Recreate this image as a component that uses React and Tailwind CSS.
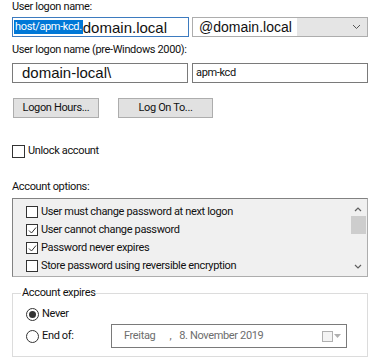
import React from 'react';

const font = { fontFamily: 'Roboto, "Liberation Sans", Arial, sans-serif' };
const big = { fontFamily: '"Liberation Sans", Arial, sans-serif', letterSpacing: 0 };

const Check = ({ checked, size = 'w-[12px] h-[12px]' }) => (
  <span className={`${size} border border-[#333] bg-white flex items-center justify-center shrink-0`}>
    {checked && (
      <svg width="9" height="9" viewBox="0 0 9 9">
        <path d="M1 4.5 L3.5 7 L8 1.5" fill="none" stroke="#333" strokeWidth="1" />
      </svg>
    )}
  </span>
);

const Radio = ({ checked }) => (
  <span className="w-[13px] h-[13px] rounded-full border border-[#333] bg-white flex items-center justify-center shrink-0">
    {checked && <span className="w-[7px] h-[7px] rounded-full bg-[#333]" />}
  </span>
);

export default function App() {
  const options = [
    { label: 'User must change password at next logon', checked: false },
    { label: 'User cannot change password', checked: true },
    { label: 'Password never expires', checked: true },
    { label: 'Store password using reversible encryption', checked: false },
  ];

  return (
    <div className="w-[376px] h-[362px] bg-white text-[11px] tracking-[-0.35px] text-[#111] overflow-hidden" style={font}>
      <div className="pl-[12px] pr-[8px]">
        <div className="h-[14px] leading-[14px]">User logon name:</div>
        <div className="flex gap-[3px] mt-[3px]">
          <div className="w-[177px] h-[20px] border border-[#3d7bbf] flex items-center pl-[1px]">
            <span className="bg-[#0078d7] text-white leading-[14px] px-[1px]">host/apm-kcd.</span>
            <span className="text-[15px] leading-[15px]" style={big}>domain.local</span>
          </div>
          <div className="w-[176px] h-[20px] border border-[#adadad] flex">
            <div className="w-[104px] bg-white flex items-center pl-[6px] text-[14px]" style={big}>@domain.local</div>
            <div className="flex-1 bg-[#e5e5e5] flex items-center justify-end pr-[6px]">
              <svg width="9" height="6" viewBox="0 0 9 6">
                <path d="M1 1 L4.5 4.5 L8 1" fill="none" stroke="#555" strokeWidth="1" />
              </svg>
            </div>
          </div>
        </div>

        <div className="mt-[6px] h-[14px] leading-[14px]">User logon name (pre-Windows 2000):</div>
        <div className="flex gap-[4px] mt-[6px]">
          <div className="w-[176px] h-[20px] border border-[#7a7a7a] flex items-center pl-[9px] text-[15px]" style={big}>domain-local\</div>
          <div className="w-[176px] h-[20px] border border-[#7a7a7a] flex items-center pl-[3px]">apm-kcd</div>
        </div>

        <div className="flex gap-[19px] mt-[15px] ml-[1px]">
          <div className="w-[86px] h-[20px] bg-[#e1e1e1] border border-[#adadad] flex items-center justify-center">Logon Hours...</div>
          <div className="w-[95px] h-[20px] bg-[#e1e1e1] border border-[#adadad] flex items-center justify-center">Log On To...</div>
        </div>

        <div className="flex items-center gap-[3px] mt-[27px] h-[13px]">
          <Check checked={false} size="w-[13px] h-[13px]" />
          <span>Unlock account</span>
        </div>

        <div className="mt-[22px] h-[14px] leading-[14px]">Account options:</div>
        <div className="mt-[4px] w-[356px] h-[79px] border border-[#adadad] border-t-[#828282] border-l-[#828282] bg-[#f0f0f0] flex">
          <div className="flex-1 pl-[13px] pt-[6px] flex flex-col gap-[4px]">
            {options.map((o) => (
              <div key={o.label} className="flex items-center gap-[3px] h-[14px]">
                <Check checked={o.checked} />
                <span>{o.label}</span>
              </div>
            ))}
          </div>
          <div className="w-[16px] flex flex-col items-center mr-[1px]">
            <div className="h-[17px] pt-[4px] flex items-center justify-center">
              <svg width="8" height="5" viewBox="0 0 8 5">
                <path d="M1 4 L4 1 L7 4" fill="none" stroke="#606060" strokeWidth="1.2" />
              </svg>
            </div>
            <div className="w-[15px] h-[18px] bg-[#cdcdcd]" />
            <div className="flex-1" />
            <div className="h-[15px] pb-[4px] flex items-center justify-center">
              <svg width="8" height="5" viewBox="0 0 8 5">
                <path d="M1 1 L4 4 L7 1" fill="none" stroke="#606060" strokeWidth="1.2" />
              </svg>
            </div>
          </div>
        </div>

        <div className="relative mt-[16px] w-[356px] h-[64px] border border-[#dcdcdc]">
          <span className="absolute -top-[8px] left-[8px] bg-white px-[1px] leading-[14px]">Account expires</span>
          <div className="pl-[13px] pt-[13px] flex flex-col gap-[3px]">
            <div className="flex items-center gap-[3px] h-[14px]">
              <Radio checked />
              <span>Never</span>
            </div>
            <div className="flex items-center h-[24px]">
              <div className="flex items-center gap-[3px] w-[85px]">
                <Radio checked={false} />
                <span>End of:</span>
              </div>
              <div className="w-[236px] h-[24px] border border-[#7a7a7a] flex items-center pl-[12px] text-[#6d6d6d]">
                <span>Freitag</span>
                <span className="ml-[14px]">,</span>
                <span className="ml-[8px]">8. November 2019</span>
                <div className="flex-1" />
                <div className="flex items-center gap-[1px] pr-[5px]">
                  <span className="w-[11px] h-[11px] border border-[#b0b0b0] bg-[#f4f4f4]" />
                  <svg width="7" height="4" viewBox="0 0 7 4">
                    <path d="M0 0 L7 0 L3.5 4 Z" fill="#b0b0b0" />
                  </svg>
                </div>
              </div>
            </div>
          </div>
        </div>
      </div>
    </div>
  );
}
